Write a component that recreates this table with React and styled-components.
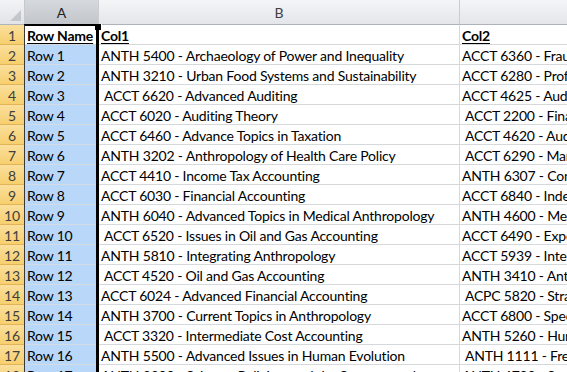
import React from 'react'
import styled, { createGlobalStyle, css } from 'styled-components'

const GlobalStyle = createGlobalStyle`
  html, body {
    margin: 0;
    padding: 0;
    background: #fff;
    overflow: hidden;
  }
`

const COLS = '25px 74px 361px 160px'

const Sheet = styled.div`
  position: relative;
  width: 567px;
  height: 372px;
  overflow: hidden;
  background: #fff;
  font-family: Lato, 'Liberation Sans', sans-serif;
  font-size: 14px;
  color: #000;
`

const HeaderRow = styled.div`
  display: grid;
  grid-template-columns: ${COLS};
  height: 25px;
`

const Corner = styled.div`
  position: relative;
  background: linear-gradient(#f2f3f5, #e1e4e8);
  border-right: 1px solid #c5c9ce;
  border-bottom: 1px solid #aeb3b9;
  box-sizing: border-box;

  &::after {
    content: '';
    position: absolute;
    right: 3px;
    bottom: 3px;
    border-style: solid;
    border-width: 0 0 11px 11px;
    border-color: transparent transparent #c3c7cc transparent;
  }
`

const ColHeader = styled.div`
  display: flex;
  align-items: center;
  justify-content: center;
  box-sizing: border-box;
  background: linear-gradient(#f4f5f7, #e3e6ea);
  border-right: 1px solid #c9cdd2;
  border-bottom: 1px solid #aeb3b9;
  color: #3e3e3e;
  font-size: 14px;
  padding-top: 1px;

  ${props => props.selected && css`
    background: linear-gradient(#d6d9dd, #c2c6cb);
    color: #222;
    border-bottom: 1px solid #8d9298;
  `}
`

const Row = styled.div`
  display: grid;
  grid-template-columns: ${COLS};
  height: 20px;
`

const RowHeader = styled.div`
  display: flex;
  align-items: center;
  justify-content: center;
  box-sizing: border-box;
  background: linear-gradient(#fadf9c, #f6cf6e);
  border-right: 1px solid #b9903e;
  border-bottom: 1px solid #e2b457;
  color: #3f3f3f;
  font-size: 14px;
  padding-top: 2px;
`

const Cell = styled.div`
  display: flex;
  align-items: center;
  box-sizing: border-box;
  padding: 2px 0 0 2px;
  border-right: 1px solid #d6d9dc;
  border-bottom: 1px solid #d6d9dc;
  white-space: pre;
  overflow: hidden;
  letter-spacing: -0.2px;

  ${props => props.selected && css`
    background: #b9d7f8;
    border-bottom-color: #d3dbe5;
  `}

  ${props => props.bold && css`
    font-weight: 700;
    text-decoration: underline;
    text-underline-offset: 2px;
  `}
`

const Selection = styled.div`
  position: absolute;
  left: 24px;
  top: 24px;
  width: 75px;
  bottom: 0;
  box-sizing: border-box;
  border-top: 2px solid #000;
  border-left: 1px solid #3a3a3a;
  border-right: 3px solid #000;
  pointer-events: none;
`

const Handle = styled.div`
  position: absolute;
  left: 95px;
  top: 24px;
  width: 6px;
  height: 6px;
  background: #000;
  border-right: 1px solid #fff;
`

const rows = [
  ['Row 1', 'ANTH 5400 - Archaeology of Power and Inequality', 'ACCT 6360 - Fraud Examination'],
  ['Row 2', 'ANTH 3210 - Urban Food Systems and Sustainability', 'ACCT 6280 - Professional Research'],
  ['Row 3', ' ACCT 6620 - Advanced Auditing', 'ACCT 4625 - Auditing'],
  ['Row 4', 'ACCT 6020 - Auditing Theory', ' ACCT 2200 - Financial Accounting'],
  ['Row 5', 'ACCT 6460 - Advance Topics in Taxation', ' ACCT 4620 - Auditing'],
  ['Row 6', 'ANTH 3202 - Anthropology of Health Care Policy', ' ACCT 6290 - Managerial'],
  ['Row 7', 'ACCT 4410 - Income Tax Accounting', 'ANTH 6307 - Contemporary'],
  ['Row 8', 'ACCT 6030 - Financial Accounting', 'ACCT 6840 - Independent'],
  ['Row 9', 'ANTH 6040 - Advanced Topics in Medical Anthropology', 'ANTH 4600 - Medical'],
  ['Row 10', ' ACCT 6520 - Issues in Oil and Gas Accounting', 'ACCT 6490 - Experiential'],
  ['Row 11', 'ANTH 5810 - Integrating Anthropology', 'ACCT 5939 - Internship'],
  ['Row 12', ' ACCT 4520 - Oil and Gas Accounting', 'ANTH 3410 - Anthropology'],
  ['Row 13', 'ACCT 6024 - Advanced Financial Accounting', ' ACPC 5820 - Strategic'],
  ['Row 14', 'ANTH 3700 - Current Topics in Anthropology', 'ACCT 6800 - Special Topics'],
  ['Row 15', ' ACCT 3320 - Intermediate Cost Accounting', 'ANTH 5260 - Human'],
  ['Row 16', 'ANTH 5500 - Advanced Issues in Human Evolution', ' ANTH 1111 - Freshman'],
  ['Row 17', 'ANTH 3300 - Science, Religion, and the Supernatural', 'ANTH 6780 - Seminar'],
]

const App = () => {
  return (
    <>
      <GlobalStyle />
      <Sheet>
        <HeaderRow>
          <Corner />
          <ColHeader selected>A</ColHeader>
          <ColHeader>B</ColHeader>
          <ColHeader />
        </HeaderRow>
        <Row>
          <RowHeader>1</RowHeader>
          <Cell bold>Row Name</Cell>
          <Cell bold>Col1</Cell>
          <Cell bold>Col2</Cell>
        </Row>
        {rows.map((r, i) => (
          <Row key={r[0]}>
            <RowHeader>{i + 2}</RowHeader>
            <Cell selected>{r[0]}</Cell>
            <Cell>{r[1]}</Cell>
            <Cell>{r[2]}</Cell>
          </Row>
        ))}
        <Selection />
        <Handle />
      </Sheet>
    </>
  )
}

export default App
